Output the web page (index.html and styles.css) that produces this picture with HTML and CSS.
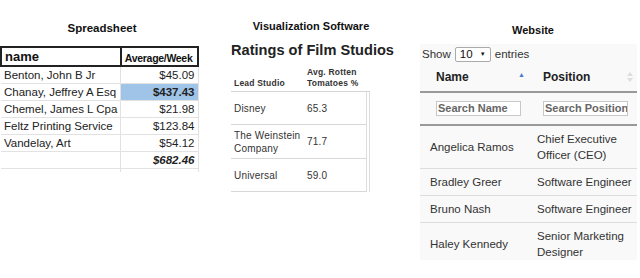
FILE: index.html
```html
<!DOCTYPE html>
<html lang="en">
<head>
    <meta charset="UTF-8">
    <title>Data Views</title>
    <link rel="stylesheet" href="styles.css">
</head>
<body>

<!-- Spreadsheet -->
<div class="sheet">
    <h2 class="sheet-title">Spreadsheet</h2>
    <table class="sheet-table">
        <tr class="sheet-head">
            <th class="col-name">name</th>
            <th class="col-avg">Average/Week</th>
        </tr>
        <tr><td>Benton, John B Jr</td><td class="num">$45.09</td></tr>
        <tr><td>Chanay, Jeffrey A Esq</td><td class="num selected">$437.43</td></tr>
        <tr><td>Chemel, James L Cpa</td><td class="num">$21.98</td></tr>
        <tr><td>Feltz Printing Service</td><td class="num">$123.84</td></tr>
        <tr><td>Vandelay, Art</td><td class="num">$54.12</td></tr>
        <tr><td></td><td class="num total">$682.46</td></tr>
        <tr class="stub"><td></td><td></td></tr>
    </table>
</div>

<!-- Visualization -->
<div class="viz">
    <h2 class="viz-title">Visualization Software</h2>
    <h1 class="viz-heading">Ratings of Film Studios</h1>
    <table class="viz-table">
        <tr>
            <th class="studio">Lead Studio</th>
            <th>Avg. Rotten<br>Tomatoes %</th>
            <th class="gap"></th>
        </tr>
        <tr><td>Disney</td><td>65.3</td><td class="gap"></td></tr>
        <tr><td>The Weinstein<br>Company</td><td>71.7</td><td class="gap"></td></tr>
        <tr><td>Universal</td><td>59.0</td><td class="gap"></td></tr>
    </table>
</div>

<!-- Website -->
<div class="site">
    <h2 class="site-title">Website</h2>
    <div class="panel">
        <div class="length">
            Show
            <span class="select">10 <span class="caret">&#9660;</span></span>
            entries
        </div>
        <table class="data">
            <thead>
                <tr class="data-head">
                    <th class="c1">Name <span class="sort active">&#9650;</span></th>
                    <th class="c2">Position
                        <span class="sort both">
                            <svg width="6" height="10" viewBox="0 0 6 10"><path d="M3 0L6 4H0z M3 10L0 6H6z" fill="#ddd"/></svg>
                        </span>
                    </th>
                </tr>
                <tr class="search">
                    <th class="c1"><span class="field">Search Name</span></th>
                    <th class="c2"><span class="field">Search Position</span></th>
                </tr>
            </thead>
            <tbody>
                <tr><td>Angelica Ramos</td><td>Chief Executive<br>Officer (CEO)</td></tr>
                <tr><td>Bradley Greer</td><td>Software Engineer</td></tr>
                <tr><td>Bruno Nash</td><td>Software Engineer</td></tr>
                <tr><td>Haley Kennedy</td><td>Senior Marketing<br>Designer</td></tr>
            </tbody>
        </table>
    </div>
</div>

</body>
</html>
```

FILE: styles.css
```css
* {
    margin: 0;
    padding: 0;
    box-sizing: border-box;
}

body {
    font-family: "Liberation Sans", Arial, sans-serif;
    background-color: #fff;
    color: #222;
    display: flex;
    width: 640px;
    height: 278px;
    overflow: hidden;
}

h1, h2 {
    font-weight: bold;
}

/* Spreadsheet */
.sheet {
    width: 204px;
    padding-top: 21px;
}

.sheet-title {
    font-size: 11.5px;
    line-height: 14px;
    text-align: center;
    color: #111;
}

.sheet-table {
    margin-top: 11px;
    width: 199px;
    border-collapse: collapse;
    font-size: 11.5px;
}

.sheet-table td {
    height: 17px;
    padding: 0 3px;
    border: 1px solid #e2e2e2;
    border-top: none;
    white-space: nowrap;
}

.sheet-table td:first-child {
    border-left: none;
    width: 118px;
}

.sheet-head th {
    height: 19px;
    border: 2px solid #222;
    text-align: left;
    padding: 0 3px;
    vertical-align: bottom;
    color: #111;
}

.col-name {
    font-size: 13px;
    line-height: 16px;
}

.col-avg {
    font-size: 10.5px;
    letter-spacing: -0.3px;
    line-height: 14px;
}

.num {
    text-align: right;
}

.selected {
    background-color: #a0c3e8;
    font-weight: bold;
}

.total {
    font-weight: bold;
    font-style: italic;
}

.sheet-table .stub td {
    height: 4px;
    border-bottom: none;
}

/* Visualization */
.viz {
    width: 216px;
    padding-top: 19px;
    padding-left: 27px;
}

.viz-title {
    width: 160px;
    font-size: 11px;
    line-height: 14px;
    text-align: center;
    color: #111;
}

.viz-heading {
    margin-top: 8px;
    font-size: 14.6px;
    line-height: 18px;
    color: #222;
}

.viz-table {
    margin-top: 8px;
    width: 139px;
    border-collapse: collapse;
    font-size: 10px;
    color: #333;
    letter-spacing: 0.2px;
}

.viz-table th {
    font-size: 8.5px;
    line-height: 11px;
    text-align: left;
    vertical-align: bottom;
    padding: 0 0 2px 3px;
    border-bottom: 1px solid #d4d4d4;
}

.viz-table th.studio {
    width: 73px;
}

.viz-table td {
    height: 33px;
    line-height: 13px;
    padding: 0 3px;
    border-bottom: 1px solid #d8d8d8;
}

.viz-table td:nth-child(2) {
    border-right: 1px solid #ddd;
}

.viz-table .gap {
    width: 3px;
    padding: 0;
}

.viz-table td.gap {
    border-bottom: none;
    border-right: 1px solid #ddd;
}

.viz-table tr:nth-child(3) td {
    height: 34px;
}

/* Website */
.site {
    width: 220px;
    padding-top: 23px;
}

.site-title {
    width: 226px;
    font-size: 11px;
    line-height: 14px;
    text-align: center;
    color: #111;
}

.panel {
    margin-top: 7px;
    width: 217px;
    height: 216px;
    background-color: #f9f9f9;
    font-size: 11.5px;
    color: #333;
}

.length {
    display: flex;
    align-items: center;
    gap: 4px;
    height: 18px;
    padding: 2px 0 0 2px;
}

.select {
    display: inline-flex;
    align-items: center;
    justify-content: space-between;
    width: 36px;
    height: 15px;
    padding: 0 4px;
    border: 1px solid #aaa;
    border-radius: 2px;
    background-color: #fff;
    color: #111;
}

.caret {
    font-size: 6px;
}

.data {
    width: 217px;
    border-collapse: collapse;
}

.data-head th {
    height: 30px;
    text-align: left;
    font-size: 12px;
    padding: 0 0 0 16px;
    position: relative;
    border-bottom: 2px solid #999;
    color: #222;
}

.data .c1 {
    width: 107px;
}

.sort {
    position: absolute;
    top: 9px;
    font-size: 7px;
}

.sort.active {
    right: 2px;
    color: #4a7bd0;
}

.sort.both {
    right: 4px;
    top: 10px;
}

.search th {
    height: 33px;
    padding: 0 0 0 16px;
    border-bottom: 2px solid #999;
    text-align: left;
}

.field {
    display: block;
    width: 85px;
    height: 15px;
    line-height: 13px;
    padding: 0 1px;
    border: 1px solid #c8c8c8;
    background-color: #fff;
    font-size: 11px;
    font-weight: bold;
    color: #666;
    white-space: nowrap;
    overflow: hidden;
}

.data td {
    padding: 5px 0 5px 10px;
    line-height: 16px;
    border-bottom: 1px solid #ddd;
    vertical-align: middle;
}

.data tbody tr:last-child td {
    border-bottom: none;
}
```
